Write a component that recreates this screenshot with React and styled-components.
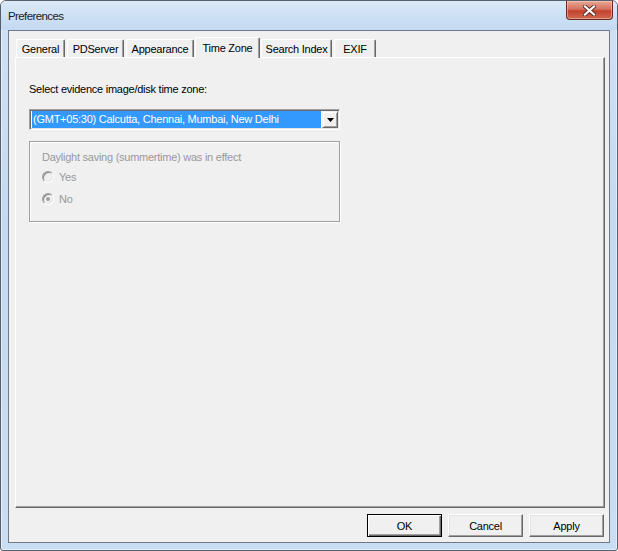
import React from "react";
import styled, { createGlobalStyle, css } from "styled-components";

const GlobalStyle = createGlobalStyle`
  html, body {
    margin: 0;
    padding: 0;
    background: #ffffff;
  }
  body {
    font-family: "Liberation Sans", Arial, sans-serif;
    font-size: 11px;
    letter-spacing: -0.25px;
    color: #000;
  }
`;

const tabs = [
  { label: "General", width: 49 },
  { label: "PDServer", width: 57 },
  { label: "Appearance", width: 68 },
  { label: "Time Zone", width: 65, active: true },
  { label: "Search Index", width: 71 },
  { label: "EXIF", width: 42 },
];

function App() {
  return (
    <>
      <GlobalStyle />
      <Window>
        <TitleBar>
          <Title>Preferences</Title>
          <CloseButton aria-label="Close">
            <svg width="13" height="11" viewBox="0 0 13 11">
              <path
                d="M2 1.5 L11 9.5 M11 1.5 L2 9.5"
                stroke="#5a2a22"
                strokeWidth="4"
                strokeLinecap="square"
              />
              <path
                d="M2 1.5 L11 9.5 M11 1.5 L2 9.5"
                stroke="#ffffff"
                strokeWidth="2.2"
                strokeLinecap="square"
              />
            </svg>
          </CloseButton>
        </TitleBar>
        <Client>
          <TabRow>
            {tabs.map((t) => (
              <Tab key={t.label} $width={t.width} $active={t.active}>
                {t.label}
              </Tab>
            ))}
          </TabRow>
          <Panel>
            <FieldLabel>Select evidence image/disk time zone:</FieldLabel>
            <Combo>
              <ComboValue>(GMT+05:30) Calcutta, Chennai, Mumbai, New Delhi</ComboValue>
              <ComboArrow>
                <svg width="7" height="4" viewBox="0 0 7 4">
                  <path d="M0 0 H7 L3.5 4 Z" fill="#000" />
                </svg>
              </ComboArrow>
            </Combo>
            <GroupBox>
              <GroupCaption>Daylight saving (summertime) was in effect</GroupCaption>
              <RadioRow>
                <RadioDot />
                Yes
              </RadioRow>
              <RadioRow>
                <RadioDot $checked />
                No
              </RadioRow>
            </GroupBox>
          </Panel>
          <ButtonRow>
            <PushButton $default>OK</PushButton>
            <PushButton>Cancel</PushButton>
            <PushButton>Apply</PushButton>
          </ButtonRow>
        </Client>
      </Window>
    </>
  );
}

const Window = styled.div`
  width: 618px;
  height: 551px;
  box-sizing: border-box;
  display: flex;
  flex-direction: column;
  border: 1px solid #56606c;
  border-radius: 6px 6px 3px 3px;
  background: linear-gradient(180deg, #cfe1f5 0%, #c4daf2 40%, #c9ddf3 100%);
  box-shadow: inset 0 0 0 1px rgba(255, 255, 255, 0.55);
`;

const TitleBar = styled.div`
  height: 29px;
  display: flex;
  align-items: flex-start;
  justify-content: space-between;
  padding: 0 4px 0 7px;
  background: linear-gradient(180deg, #dbe9f8 0%, #cbdff4 60%, #c4daf2 100%);
  border-radius: 5px 5px 0 0;
`;

const Title = styled.div`
  align-self: center;
  font-size: 11.5px;
  letter-spacing: -0.6px;
  color: #1b1b1b;
  margin-top: 1px;
`;

const CloseButton = styled.div`
  width: 47px;
  height: 19px;
  box-sizing: border-box;
  display: flex;
  align-items: center;
  justify-content: center;
  border: 1px solid #6b2a20;
  border-top: 0;
  border-radius: 0 0 4px 4px;
  background: linear-gradient(180deg, #e7a895 0%, #d5735f 45%, #c2422d 55%, #cf6a50 100%);
  box-shadow: inset 0 0 0 1px rgba(255, 220, 210, 0.45);
`;

const Client = styled.div`
  flex: 1;
  margin: 0 7px 7px 7px;
  display: flex;
  flex-direction: column;
  background: #f0f0f0;
  border: 1px solid #6f7a88;
  padding: 6px 4px 5px 6px;
`;

const TabRow = styled.div`
  height: 20px;
  display: flex;
  align-items: flex-end;
  padding-left: 1px;
  position: relative;
  z-index: 1;
`;

const Tab = styled.div`
  width: ${(p) => p.$width}px;
  height: 18px;
  box-sizing: border-box;
  margin-right: 2px;
  display: flex;
  align-items: center;
  justify-content: center;
  background: #f0f0f0;
  border-left: 1px solid #ffffff;
  border-top: 1px solid #ffffff;
  border-right: 1px solid #696969;
  border-radius: 2px 2px 0 0;
  box-shadow: inset -1px 0 0 #a0a0a0;
  white-space: nowrap;
  padding-top: 1px;
  ${(p) =>
    p.$active &&
    css`
      height: 21px;
      margin: 0 1px -1px -1px;
      padding-bottom: 2px;
    `}
`;

const Panel = styled.div`
  flex: 1;
  display: flex;
  flex-direction: column;
  align-items: flex-start;
  border: 1px solid;
  border-color: #ffffff #696969 #696969 #ffffff;
  box-shadow: inset -1px -1px 0 #a0a0a0;
  padding: 25px 0 0 13px;
`;

const FieldLabel = styled.div`
  line-height: 13px;
`;

const Combo = styled.div`
  margin-top: 13px;
  width: 311px;
  height: 21px;
  box-sizing: border-box;
  display: flex;
  background: #ffffff;
  border: 1px solid;
  border-color: #a0a0a0 #ffffff #ffffff #a0a0a0;
  box-shadow: inset 1px 1px 0 #696969, inset -1px -1px 0 #e3e3e3;
  padding: 1px 1px 1px 2px;
`;

const ComboValue = styled.div`
  flex: 1;
  background: #3399ff;
  color: #ffffff;
  line-height: 17px;
  padding-left: 1px;
  margin-right: 1px;
  white-space: nowrap;
`;

const ComboArrow = styled.div`
  width: 16px;
  box-sizing: border-box;
  display: flex;
  align-items: center;
  justify-content: center;
  background: #f0f0f0;
  border: 1px solid;
  border-color: #f0f0f0 #696969 #696969 #f0f0f0;
  box-shadow: inset 1px 1px 0 #ffffff, inset -1px -1px 0 #a0a0a0;
`;

const GroupBox = styled.div`
  margin-top: 11px;
  width: 311px;
  height: 81px;
  box-sizing: border-box;
  border: 1px solid #a0a0a0;
  box-shadow: inset 1px 1px 0 #ffffff, 1px 1px 0 #ffffff;
  padding: 9px 0 0 12px;
  color: #999999;
`;

const GroupCaption = styled.div`
  line-height: 13px;
  margin-bottom: 2px;
`;

const RadioRow = styled.div`
  height: 22px;
  display: flex;
  align-items: center;
  gap: 5px;
`;

const RadioDot = styled.span`
  width: 12px;
  height: 12px;
  box-sizing: border-box;
  border-radius: 50%;
  border: 1px solid;
  border-color: #a0a0a0 #ffffff #ffffff #a0a0a0;
  box-shadow: inset 1px 1px 0 #8a8a8a, inset -1px -1px 0 #e3e3e3;
  background: #f0f0f0;
  display: flex;
  align-items: center;
  justify-content: center;
  &::after {
    content: "";
    width: 4px;
    height: 4px;
    border-radius: 50%;
    background: ${(p) => (p.$checked ? "#a0a0a0" : "transparent")};
  }
`;

const ButtonRow = styled.div`
  display: flex;
  justify-content: flex-end;
  gap: 6px;
  margin-top: 6px;
  padding-right: 1px;
`;

const PushButton = styled.div`
  width: 75px;
  height: 23px;
  box-sizing: border-box;
  display: flex;
  align-items: center;
  justify-content: center;
  background: #f0f0f0;
  border: 1px solid;
  border-color: #ffffff #696969 #696969 #ffffff;
  box-shadow: inset -1px -1px 0 #a0a0a0, inset 1px 1px 0 #e3e3e3;
  ${(p) =>
    p.$default &&
    css`
      border: 1px solid #000000;
      box-shadow: inset 1px 1px 0 #ffffff, inset -1px -1px 0 #696969,
        inset -2px -2px 0 #a0a0a0;
    `}
`;

export default App;
